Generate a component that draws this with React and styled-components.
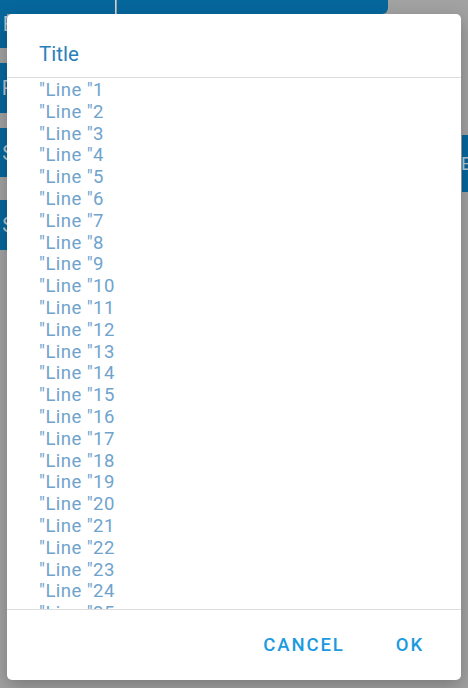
import React from 'react';
import styled, { createGlobalStyle } from 'styled-components';

const Global = createGlobalStyle`
  html, body {
    margin: 0;
    padding: 0;
    background: #a2a2a2;
    font-family: Roboto, "Liberation Sans", sans-serif;
  }
`;

const Page = styled.div`
  position: relative;
  width: 468px;
  height: 688px;
  overflow: hidden;
  background: #a2a2a2;
`;

const TopBar = styled.div`
  display: flex;
  height: 14px;
  width: 388px;
  gap: 1px;
`;

const BarPart = styled.div`
  background: #06679d;
  width: ${(p) => p.w}px;
  border-radius: 0 0 ${(p) => (p.last ? '6px' : '0')} 0;
  border-right: ${(p) => (p.last ? 'none' : '1px solid #c8d6df')};
`;

const SideColumn = styled.div`
  display: flex;
  flex-direction: column;
  width: 7px;
  margin-top: -14px;
`;

const Tile = styled.div`
  height: ${(p) => p.h}px;
  margin-bottom: ${(p) => p.gap}px;
  background: #06679d;
  color: #b8c9d6;
  font-size: 20px;
  display: flex;
  align-items: center;
  justify-content: flex-end;
  overflow: hidden;
  span {
    margin-right: -7px;
  }
`;

const RightTile = styled.div`
  position: absolute;
  right: 0;
  top: 135px;
  width: 6px;
  height: 57px;
  background: #06679d;
  color: #b8c9d6;
  font-size: 18px;
  display: flex;
  align-items: center;
  overflow: hidden;
  span {
    margin-left: -1px;
  }
`;

const Dialog = styled.div`
  position: absolute;
  left: 7px;
  top: 14px;
  width: 454px;
  height: 666px;
  background: #ffffff;
  border-radius: 5px;
  box-shadow: 0 6px 18px rgba(0, 0, 0, 0.25);
  display: flex;
  flex-direction: column;
  overflow: hidden;
`;

const Header = styled.div`
  height: 64px;
  box-sizing: border-box;
  padding: 17px 32px 0;
  display: flex;
  align-items: center;
  border-bottom: 1px solid #dedede;
  font-size: 20.5px;
  color: #2a80b9;
`;

const Body = styled.div`
  flex: 1;
  overflow: hidden;
  padding: 2px 32px 0;
`;

const Line = styled.div`
  font-size: 18.5px;
  line-height: 21.8px;
  color: #6fa3cc;
  letter-spacing: 0.45px;
`;

const Footer = styled.div`
  height: 71px;
  border-top: 1px solid #dedede;
  box-sizing: border-box;
  display: flex;
  justify-content: flex-end;
  align-items: center;
  padding: 0 37px 0 0;
  gap: 51px;
`;

const Button = styled.button`
  border: none;
  background: none;
  padding: 0;
  font-family: Roboto, "Liberation Sans", sans-serif;
  font-size: 18.5px;
  font-weight: 500;
  letter-spacing: 1.9px;
  color: #1c9ae0;
`;

const lines = Array.from({ length: 26 }, (_, i) => `"Line "${i + 1}`);

export default function App() {
  return (
    <Page>
      <Global />
      <TopBar>
        <BarPart w={115} />
        <BarPart w={272} last />
      </TopBar>
      <SideColumn>
        <Tile h={48} gap={15}>
          <span>E</span>
        </Tile>
        <Tile h={50} gap={15}>
          <span>R</span>
        </Tile>
        <Tile h={49} gap={23}>
          <span>S</span>
        </Tile>
        <Tile h={50} gap={0}>
          <span>S</span>
        </Tile>
      </SideColumn>
      <RightTile>
        <span>E</span>
      </RightTile>
      <Dialog>
        <Header>Title</Header>
        <Body>
          {lines.map((l) => (
            <Line key={l}>{l}</Line>
          ))}
        </Body>
        <Footer>
          <Button>CANCEL</Button>
          <Button>OK</Button>
        </Footer>
      </Dialog>
    </Page>
  );
}
